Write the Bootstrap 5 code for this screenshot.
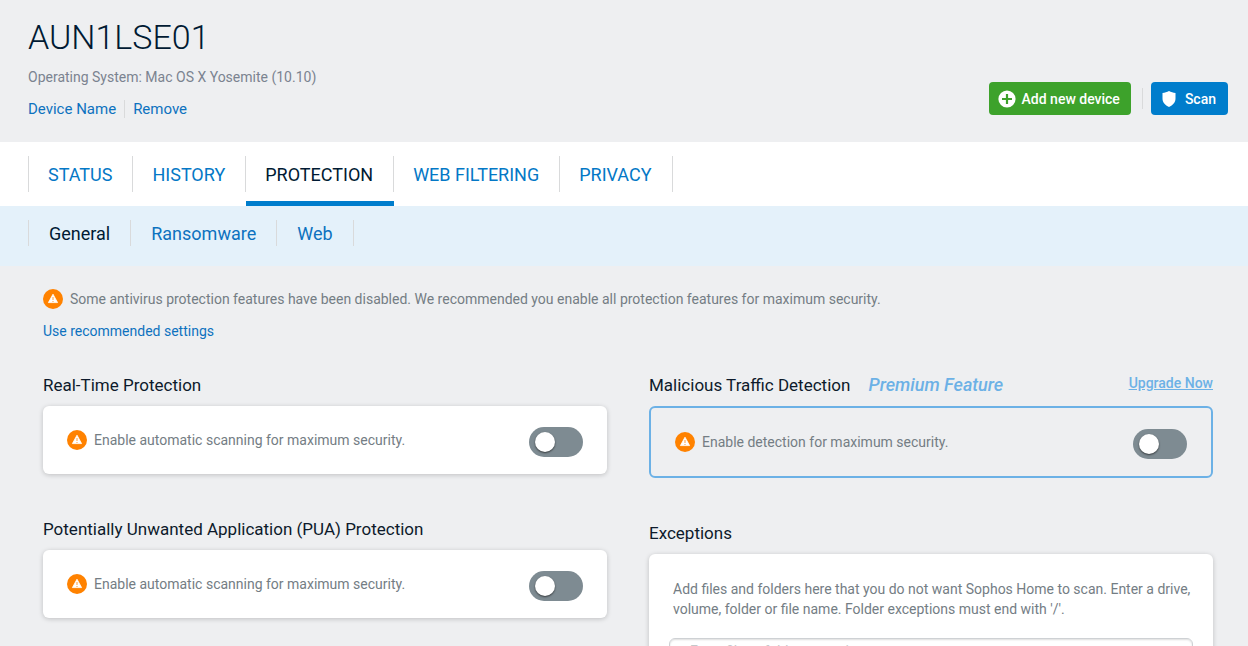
<!DOCTYPE html>
<html lang="en">
<head>
<meta charset="utf-8">
<meta name="viewport" content="width=device-width, initial-scale=1">
<title>AUN1LSE01 - Protection</title>
<link href="https://cdn.jsdelivr.net/npm/bootstrap@5.3.0/dist/css/bootstrap.min.css" rel="stylesheet">
<style>
  :root { --ink: #001a33; --blue: #0d72bf; --line: #d9dadb; --muted: #747d84; --sky: #6cb1e6; }
  body { font-family: Roboto, "Liberation Sans", sans-serif; font-size: 14px; line-height: 20px; background: #eeeff1; color: var(--muted); }
  a { color: var(--blue); text-decoration: none; }
  .device-head { padding: 17px 20px 23px 28px; }
  .device-head h1 { font-size: 34px; line-height: 40px; font-weight: 300; color: var(--ink); }
  .device-os { color: #7b8390; margin: 10px 0 12px; }
  .device-links { font-size: 15px; }
  .device-links a + a { border-left: 1px solid var(--line); margin-left: 8px; padding-left: 8px; }
  .action { font-size: 14px; line-height: 20px; font-weight: 500; height: 33px; border: 0; border-radius: 4px; color: #fff; }
  .action-add { background: #3da22b; padding: 0 11px 0 9px; gap: 6px; }
  .action-scan { background: #007dcc; padding: 0 12px 0 11px; gap: 9px; }
  .action-rule { width: 1px; height: 21px; background: var(--line); margin: 0 8px 0 11px; }
  .tabs { background: #fff; height: 64px; padding: 14px 28px 0; }
  .tabs .nav-link { font-size: 18px; line-height: 34px; padding: 2px 20px 0 19px; color: #0478c6; border-right: 1px solid var(--line); position: relative; }
  .tabs .nav-item:first-child .nav-link, .subtabs .nav-item:first-child .nav-link { border-left: 1px solid var(--line); }
  .tabs .nav-link.active, .subtabs .nav-link.active { color: var(--ink); }
  .tabs .nav-link.active::after { content: ""; position: absolute; left: 0; right: -1px; bottom: -14px; height: 5px; background: #007dcc; }
  .subtabs { background: #e4f1fa; height: 60px; padding: 14px 28px 0; }
  .subtabs .nav-link { font-size: 18px; line-height: 24px; padding: 2px 20px 0; color: var(--blue); border-right: 1px solid var(--line); }
  main { padding: 23px 35px 0 43px; }
  .notice-link { margin: 12px 0 33px; }
  .panels { --bs-gutter-x: 42px; }
  .panels h2 { font-size: 17px; line-height: 22px; font-weight: 400; color: #0d1a2b; margin: 0; }
  .panels h2 em { color: var(--sky); font-size: 18px; font-weight: 500; margin-left: 14px; }
  .panels .panel-head { margin-bottom: 10px; }
  .panel { background: #fff; border-radius: 6px; box-shadow: 0 1px 5px #00000033; }
  .setting { height: 68px; padding: 0 24px; }
  .setting-premium { height: 72px; background: none; border: 2px solid var(--sky); box-shadow: none; }
  .panel-gap { margin-bottom: 44px; }
  .warn-icon { width: 20px; height: 20px; margin-right: 7px; flex-shrink: 0; }
  .upgrade { color: var(--sky); font-weight: 500; line-height: 18px; text-decoration: underline; }
  .toggle.form-check-input { width: 54px; height: 30px; margin: 4px 0 0; border: 0; border-radius: 15px; background: #7e8b92; position: relative; cursor: pointer; }
  .toggle::before { content: ""; position: absolute; left: 6px; top: 5px; width: 20px; height: 20px; border-radius: 50%; background: #fff; box-shadow: 0 1px 2px #00000099; }
  .toggle:checked::before { left: 28px; }
  .exceptions { padding: 25px 20px 24px; }
  .exceptions label { padding-left: 4px; margin-bottom: 19px; }
  .exceptions input { height: 26px; padding: 0 20px; font-size: 14px; line-height: 20px; border: 1px solid #ced1d4; border-radius: 6px; box-shadow: inset 0 1px 2px #00000022; }
  .exceptions input::placeholder { color: #c5c8ca; }
</style>
</head>
<body class="vh-100 overflow-hidden">
<svg class="d-none" aria-hidden="true">
  <symbol id="warn" viewBox="0 0 20 20">
    <circle cx="10" cy="10" r="10" fill="#ff8200"/>
    <path d="M10 5.2 14.600 13.600H5.400Z" fill="#fff" stroke="#fff" stroke-width=".8" stroke-linejoin="round"/>
    <path d="M10 8v3M10 12v1.100" stroke="#ffb469" stroke-width="1.3"/>
  </symbol>
</svg>

<header class="device-head d-flex justify-content-between align-items-end">
  <div>
    <h1 class="mb-0">AUN1LSE01</h1>
    <p class="device-os">Operating System: Mac OS X Yosemite (10.10)</p>
    <div class="device-links"><a href="#">Device Name</a><a href="#">Remove</a></div>
  </div>
  <div class="d-flex align-items-center mb-1">
    <button type="button" class="btn action action-add d-flex align-items-center">
      <svg width="18" height="18" viewBox="0 0 18 18" aria-hidden="true"><circle cx="9" cy="9" r="8.6" fill="#fff"/><path d="M9 4v10M4 9h10" stroke="#3da22b" stroke-width="2.2"/></svg>
      Add new device
    </button>
    <span class="action-rule"></span>
    <button type="button" class="btn action action-scan d-flex align-items-center">
      <svg width="14" height="16" viewBox="0 0 14 16" aria-hidden="true"><path d="M7 0C9 1.2 11.200 1.800 13.500 1.900V7.500C13.500 11.500 10.800 14.300 7 16 3.200 14.300.5 11.500.5 7.500V1.900C2.800 1.800 5 1.200 7 0Z" fill="#fff"/></svg>
      Scan
    </button>
  </div>
</header>

<nav class="tabs" aria-label="Device">
  <ul class="nav">
    <li class="nav-item"><a class="nav-link" href="#">STATUS</a></li>
    <li class="nav-item"><a class="nav-link" href="#">HISTORY</a></li>
    <li class="nav-item"><a class="nav-link active" aria-current="page" href="#">PROTECTION</a></li>
    <li class="nav-item"><a class="nav-link" href="#">WEB FILTERING</a></li>
    <li class="nav-item"><a class="nav-link" href="#">PRIVACY</a></li>
  </ul>
</nav>
<nav class="subtabs" aria-label="Protection">
  <ul class="nav">
    <li class="nav-item"><a class="nav-link active" aria-current="page" href="#">General</a></li>
    <li class="nav-item"><a class="nav-link" href="#">Ransomware</a></li>
    <li class="nav-item"><a class="nav-link" href="#">Web</a></li>
  </ul>
</nav>

<main>
  <div class="d-flex align-items-center">
    <svg class="warn-icon" aria-hidden="true"><use href="#warn"/></svg>
    <span>Some antivirus protection features have been disabled. We recommended you enable all protection features for maximum security.</span>
  </div>
  <p class="notice-link"><a href="#">Use recommended settings</a></p>

  <div class="row panels">
    <section class="col-6">
      <h2 class="panel-head">Real-Time Protection</h2>
      <div class="panel setting panel-gap d-flex align-items-center form-switch">
        <svg class="warn-icon" aria-hidden="true"><use href="#warn"/></svg>
        <label for="realtime">Enable automatic scanning for maximum security.</label>
        <input class="form-check-input toggle ms-auto" type="checkbox" role="switch" id="realtime">
      </div>
      <h2 class="panel-head">Potentially Unwanted Application (PUA) Protection</h2>
      <div class="panel setting d-flex align-items-center form-switch">
        <svg class="warn-icon" aria-hidden="true"><use href="#warn"/></svg>
        <label for="pua">Enable automatic scanning for maximum security.</label>
        <input class="form-check-input toggle ms-auto" type="checkbox" role="switch" id="pua">
      </div>
    </section>
    <section class="col-6">
      <div class="panel-head d-flex justify-content-between">
        <h2>Malicious Traffic Detection <em>Premium Feature</em></h2>
        <a class="upgrade" href="#">Upgrade Now</a>
      </div>
      <div class="panel setting setting-premium panel-gap d-flex align-items-center form-switch">
        <svg class="warn-icon" aria-hidden="true"><use href="#warn"/></svg>
        <label for="traffic">Enable detection for maximum security.</label>
        <input class="form-check-input toggle ms-auto" type="checkbox" role="switch" id="traffic">
      </div>
      <h2 class="panel-head">Exceptions</h2>
      <div class="panel exceptions">
        <label for="exception">Add files and folders here that you do not want Sophos Home to scan. Enter a drive, volume, folder or file name. Folder exceptions must end with '/'.</label>
        <input class="form-control" type="text" id="exception" placeholder="Enter file or folder exception">
      </div>
    </section>
  </div>
</main>
<script src="https://cdn.jsdelivr.net/npm/bootstrap@5.3.0/dist/js/bootstrap.bundle.min.js"></script>
</body>
</html>
